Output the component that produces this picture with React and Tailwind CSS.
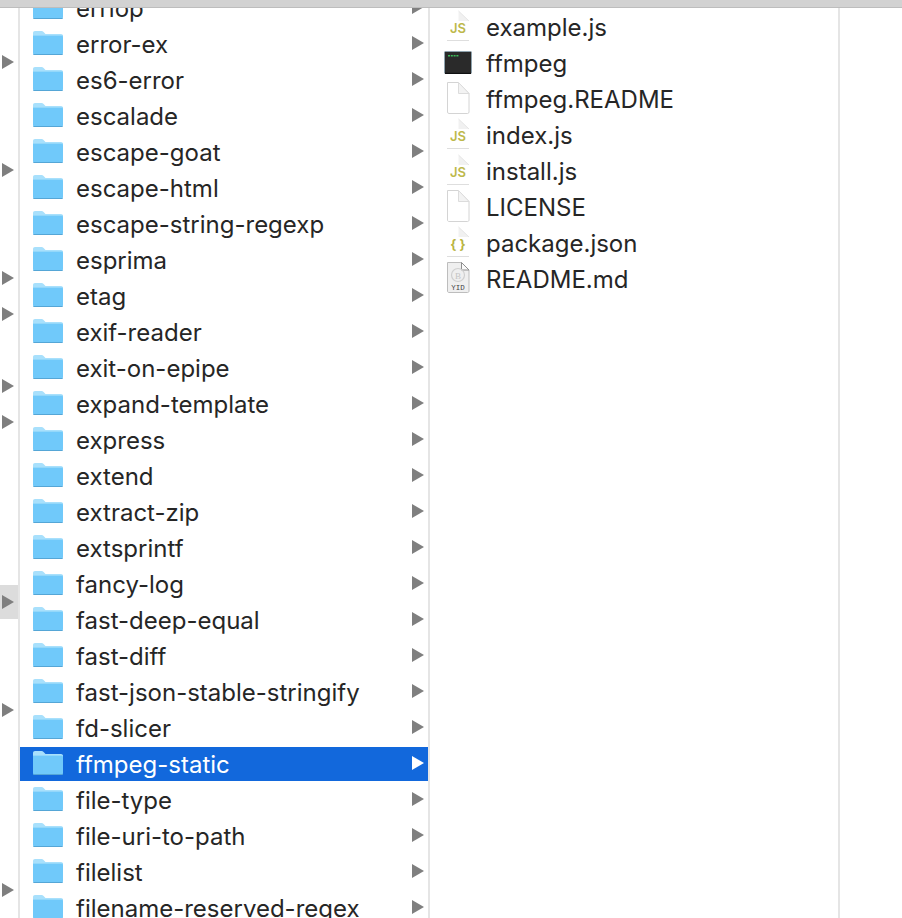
const FOLDERS = [
  'errlop', 'error-ex', 'es6-error', 'escalade', 'escape-goat', 'escape-html',
  'escape-string-regexp', 'esprima', 'etag', 'exif-reader', 'exit-on-epipe',
  'expand-template', 'express', 'extend', 'extract-zip', 'extsprintf', 'fancy-log',
  'fast-deep-equal', 'fast-diff', 'fast-json-stable-stringify', 'fd-slicer',
  'ffmpeg-static', 'file-type', 'file-uri-to-path', 'filelist', 'filename-reserved-regex',
]

const FILES = [
  { name: 'example.js', type: 'js' },
  { name: 'ffmpeg', type: 'exec' },
  { name: 'ffmpeg.README', type: 'blank' },
  { name: 'index.js', type: 'js' },
  { name: 'install.js', type: 'js' },
  { name: 'LICENSE', type: 'blank' },
  { name: 'package.json', type: 'json' },
  { name: 'README.md', type: 'md' },
]

// rows of the parent column that have an arrow
const PARENT_ROWS = [
  false, true, false, false, true, false, false, true, true, false, true, true,
  false, false, false, false, true, false, false, true, false, false, false, false, true,
]

function FolderIcon() {
  return (
    <svg width="32" height="24" viewBox="0 0 32 24" className="mb-[2px] shrink-0">
      <path d="M1 2c0-1.200.8-2 2-2h6.500c.9 0 1.500.3 2.100.9L13.500 3H29c1.200 0 2 .8 2 2v3H1z" fill="#a8e0fc" />
      <path d="M1 4.200h28c1.200 0 2 .8 2 2V22c0 1.200-.8 2-2 2H3c-1.200 0-2-.8-2-2z" fill="#70c9fa" />
      <path d="M1 22.900c.1.700.9 1.100 2 1.100h26c1.100 0 1.900-.4 2-1.100z" fill="#55a6d6" />
      <path d="M1 4.200h30v.8H1z" fill="#9adafb" />
    </svg>
  )
}

function PageIcon({ faded, children }) {
  return (
    <svg width="28" height="34" viewBox="0 0 28 34" className="shrink-0">
      {faded ? (
        <>
          <path d="M3 1h11.500L25 11v19H3z" fill="#fff" />
          <path d="M14.500 1v10H25z" fill="#f1f1f1" />
          <path d="M14.500 1L25 11" stroke="#e6e6e6" fill="none" />
          <path d="M3 30.500h22" stroke="#dedede" />
        </>
      ) : (
        <>
          <path d="M3.500 .500h11l10.500 11v18.500c0 .9-.6 1.500-1.400 1.500H4.900c-.8 0-1.400-.6-1.400-1.500z" fill="#fff" stroke="#d4d4d4" />
          <path d="M14.500 .500v11H25z" fill="#f3f3f3" stroke="#dcdcdc" />
        </>
      )}
      {children}
    </svg>
  )
}

function FileIcon({ type }) {
  if (type === 'exec') {
    return (
      <svg width="28" height="34" viewBox="0 0 28 34" className="shrink-0">
        <rect x="0.500" y="5.500" width="27" height="22" rx="1" fill="#2a2a2a" stroke="#8fa3ae" />
        <rect x="1" y="26.800" width="26" height="1.200" fill="#0f1012" />
        <path d="M4 9.700h2M6.800 9.700h2M9.600 9.700h2M12.400 9.700h2" stroke="#3dbb5a" strokeWidth="1.400" />
      </svg>
    )
  }
  if (type === 'js') {
    return (
      <PageIcon faded>
        <text x="14" y="22.500" textAnchor="middle" fontSize="13" fontWeight="600" fill="#bdb84a" fontFamily="Inter, sans-serif">JS</text>
      </PageIcon>
    )
  }
  if (type === 'json') {
    return (
      <PageIcon faded>
        <text x="14" y="22.500" textAnchor="middle" fontSize="13" fontWeight="700" fill="#b9b43f" fontFamily="Inter, sans-serif">{'{ }'}</text>
      </PageIcon>
    )
  }
  if (type === 'md') {
    return (
      <svg width="28" height="34" viewBox="0 0 28 34" className="shrink-0">
        <path d="M3.500 .500h14l7.500 7.500v21c0 .9-.6 1.500-1.400 1.500H4.900c-.8 0-1.400-.6-1.400-1.500z" fill="#efefef" stroke="#bdbdbd" />
        <path d="M17.500 .500V8H25z" fill="#fafafa" stroke="#8f8f8f" />
        <circle cx="14" cy="13" r="6.500" fill="none" stroke="#cfcfcf" strokeWidth="1.200" />
        <text x="14" y="16.500" textAnchor="middle" fontSize="9" fill="#c4c4c4" fontFamily="'Liberation Serif', serif">B</text>
        <text x="14" y="27.500" textAnchor="middle" fontSize="7.500" fill="#444" fontFamily="'Liberation Mono', monospace">YID</text>
      </svg>
    )
  }
  return <PageIcon />
}

function Arrow({ white }) {
  return (
    <svg width="12" height="14" viewBox="0 0 12 14" className="shrink-0">
      <path d="M0 0v14l12-7z" fill={white ? '#fff' : '#7f7f7f'} />
    </svg>
  )
}

export default function App() {
  return (
    <div className="h-[918px] w-[902px] overflow-hidden bg-white font-['Inter',sans-serif] text-[24px] text-[#262626]">
      <div className="relative z-10 h-2 border-b border-[#bdbdbd] bg-[#d2d2d2]" />

      <div className="flex h-[910px]">
        <div className="w-[18px] shrink-0 pt-px">
          {PARENT_ROWS.map((hasArrow, i) => (
            <div
              key={i}
              className={`mb-[2px] flex h-[34px] items-center pl-[2px] ${i === 16 ? 'bg-[#dcdcdc]' : ''}`}
            >
              {hasArrow && <Arrow />}
            </div>
          ))}
        </div>
        <div className="w-[2px] shrink-0 bg-[#e5e5e5]" />

        <div className="-mt-[17px] flex w-[408px] shrink-0 flex-col gap-[2px]">
          {FOLDERS.map(name => {
            const selected = name === 'ffmpeg-static'
            return (
              <div
                key={name}
                className={`flex h-[34px] items-center pl-[12px] pr-[4px] ${selected ? 'bg-[#1268dc] text-white' : ''}`}
              >
                <FolderIcon />
                <span className="ml-[12px] flex-1 whitespace-nowrap pt-[2px]">{name}</span>
                <div className="mb-[2px] flex">
                  <Arrow white={selected} />
                </div>
              </div>
            )
          })}
        </div>
        <div className="w-[2px] shrink-0 bg-[#e5e5e5]" />

        <div className="flex w-[408px] shrink-0 flex-col gap-[2px] pt-[2px]">
          {FILES.map(file => (
            <div key={file.name} className="flex h-[34px] items-center pl-[14px]">
              <FileIcon type={file.type} />
              <span className="ml-[14px] whitespace-nowrap pt-[2px]">{file.name}</span>
            </div>
          ))}
        </div>
        <div className="w-[2px] shrink-0 bg-[#e5e5e5]" />
      </div>
    </div>
  )
}
